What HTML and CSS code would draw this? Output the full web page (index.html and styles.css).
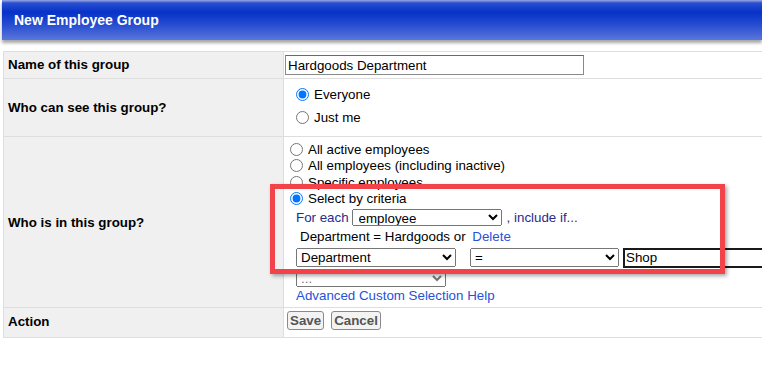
FILE: index.html
```html
<!DOCTYPE html>
<html>
<head>
<meta charset="utf-8">
<title>New Employee Group</title>
<link rel="stylesheet" href="styles.css">
</head>
<body>
<div class="header"><h1 class="title">New Employee Group</h1></div>
<table class="form">
  <tr class="r1">
    <td class="label">Name of this group</td>
    <td class="val"><input class="name" type="text" value="Hardgoods Department"></td>
  </tr>
  <tr class="r2">
    <td class="label">Who can see this group?</td>
    <td class="val vis">
      <label class="opt"><input type="radio" name="vis" checked><span>Everyone</span></label>
      <label class="opt"><input type="radio" name="vis"><span>Just me</span></label>
    </td>
  </tr>
  <tr class="r3">
    <td class="label">Who is in this group?</td>
    <td class="val who">
      <label class="opt small"><input type="radio" name="who"><span>All active employees</span></label>
      <label class="opt small"><input type="radio" name="who"><span>All employees (including inactive)</span></label>
      <label class="opt small"><input type="radio" name="who"><span>Specific employees</span></label>
      <label class="opt small"><input type="radio" name="who" checked><span>Select by criteria</span></label>
      <div class="foreach">
        <span class="navy">For each</span>
        <select class="sel-emp"><option>employee</option></select>
        <span class="navy">, include if...</span>
      </div>
      <div class="crit">Department = Hardgoods or <a class="link" href="#">Delete</a></div>
      <div class="critrow">
        <select class="sel-dept"><option>Department</option></select>
        <select class="sel-op"><option>=</option></select>
        <input class="shop" type="text" value="Shop">
      </div>
      <div class="morerow"><select class="sel-more"><option>...</option></select></div>
      <div class="help"><a class="link" href="#">Advanced Custom Selection Help</a></div>
    </td>
  </tr>
  <tr class="r4">
    <td class="label">Action</td>
    <td class="val act"><button class="btn">Save</button><button class="btn">Cancel</button></td>
  </tr>
</table>
<div class="callout"></div>
</body>
</html>
```

FILE: styles.css
```css
html, body {
  margin: 0;
  padding: 0;
  background: #fff;
}
body {
  font-family: "Liberation Sans", Arial, sans-serif;
  font-size: 13.33px;
  color: #000;
  position: relative;
  width: 762px;
  height: 376px;
  overflow: hidden;
}
.header {
  margin-left: 2px;
  height: 40px;
  background: linear-gradient(to bottom, #9aaae6 0px, #2a4fd0 3px, #0632c8 12px, #1e46cf 22px, #4c6bd8 36px, #5a78dc 40px);
  box-shadow: 0 3px 3px rgba(0,0,0,0.35);
}
.title {
  margin: 0;
  padding-left: 12px;
  font-size: 14px;
  font-weight: bold;
  color: #fff;
  line-height: 40px;
}
.form {
  margin-top: 11px;
  margin-left: 3px;
  width: 762px;
  border-collapse: collapse;
  table-layout: fixed;
}
.form td {
  border: 1px solid #dedede;
  padding: 0;
}
.label {
  width: 275px;
  background: #f0f0f0;
  font-weight: bold;
  padding-left: 4px !important;
  vertical-align: middle;
}
.val {
  background: #fff;
  vertical-align: top;
}
.r1 { height: 27px; }
.r1 .label { padding-bottom: 2px !important; }
.r1 .val { vertical-align: middle; padding-left: 1px !important; }
.name {
  box-sizing: border-box;
  width: 299px;
  height: 20px;
  border: 1px solid #8a8a8a;
  border-top-color: #6a6a6a;
  padding: 0 2px;
  font-family: "Liberation Sans", Arial, sans-serif;
  font-size: 13.33px;
  margin: 0;
  display: block;
}
.r2 { height: 58px; }
.vis { padding: 4px 0 0 12px !important; }
.opt {
  display: flex;
  align-items: center;
  height: 23px;
}
.opt input {
  margin: 0 5px 0 0;
  width: 13px;
  height: 13px;
  flex: none;
}
.r3 { height: 171px; }
.who { padding: 4px 0 0 6px !important; }
.opt.small { height: 16.5px; }
.foreach {
  display: flex;
  align-items: center;
  height: 19px;
  padding-left: 6px;
  margin-top: 1px;
}
.navy { color: #2a2a8e; }
select {
  font-family: "Liberation Sans", Arial, sans-serif;
  font-size: 13.33px;
  box-sizing: border-box;
  margin: 0;
  flex: none;
}
.sel-emp {
  width: 150px;
  height: 17px;
  margin: 0 5px 0 3px;
  padding: 0 2px;
}
.crit {
  height: 20px;
  line-height: 20px;
  padding-left: 10px;
}
.link {
  color: #2552d9;
  text-decoration: none;
  margin-left: 3px;
}
.help .link { margin-left: 0; }
.critrow {
  display: flex;
  align-items: center;
  height: 21px;
  padding-left: 6px;
}
.sel-dept { width: 160px; height: 19px; margin-right: 14px; }
.sel-op { width: 149px; height: 19px; margin-right: 4px; }
.shop {
  box-sizing: border-box;
  width: 150px;
  height: 20px;
  border: 2px solid #1a1a1a;
  padding: 0 1px;
  font-family: "Liberation Sans", Arial, sans-serif;
  font-size: 13.33px;
  margin: 0;
  flex: none;
}
.morerow {
  height: 19px;
  padding-left: 6px;
  display: flex;
  align-items: center;
}
.sel-more { width: 150px; height: 18px; color: #777; }
.help {
  padding-left: 6px;
  height: 17px;
  line-height: 17px;
}
.r4 { height: 30px; }
.r4 .label { padding-bottom: 3px !important; }
.act { padding: 3px 0 0 3px !important; }
.btn {
  font-family: "Liberation Sans", Arial, sans-serif;
  font-size: 13.33px;
  font-weight: bold;
  color: #555;
  background: #f3f3f3;
  border: 1px solid #8a8a8a;
  border-radius: 3px;
  height: 19px;
  padding: 0 2px;
  margin: 0 7px 0 0;
  line-height: 15px;
}
.callout {
  position: absolute;
  left: 270px;
  top: 184px;
  width: 445px;
  height: 80px;
  border: 5px solid #f2434b;
  box-shadow: 2px 2px 4px rgba(0,0,0,0.35);
  pointer-events: none;
}
```
